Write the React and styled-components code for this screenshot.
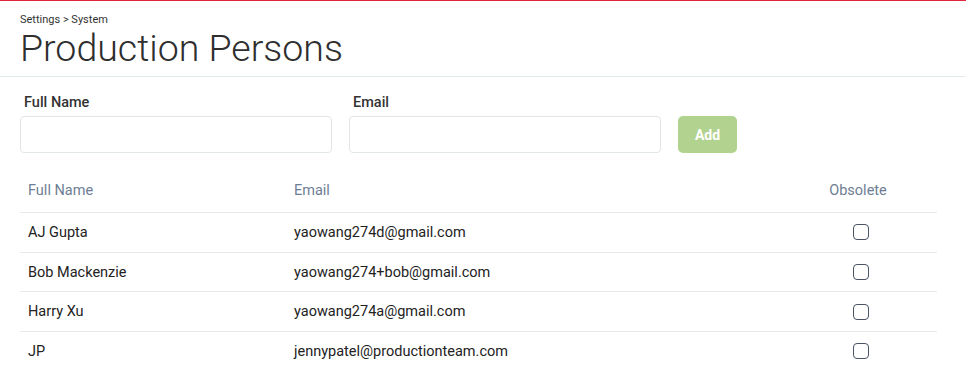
import React, { useState } from 'react'
import styled, { createGlobalStyle } from 'styled-components'

const GlobalStyle = createGlobalStyle`
    body {
        margin: 0;
        font-family: Roboto, "Liberation Sans", sans-serif;
        background: #fff;
        color: #222;
    }
`

const Page = styled.div`
    border-top: 1px solid #e2263a;
`

const Header = styled.header`
    padding: 12px 20px 7px;
    border-bottom: 1px solid #e3ebe8;
`

const Breadcrumb = styled.div`
    font-size: 11px;
    line-height: 14px;
    color: #333;
`

const Title = styled.h1`
    margin: 0;
    font-size: 37.5px;
    font-weight: 300;
    line-height: 42px;
    color: #2e2e2e;
`

const Content = styled.div`
    padding: 17px 20px 0;
`

const Form = styled.form`
    display: flex;
    align-items: flex-end;
    gap: 17px;
`

const Field = styled.label`
    display: flex;
    flex-direction: column;
    gap: 4px;
`

const Label = styled.span`
    padding-left: 4px;
    font-size: 14.5px;
    font-weight: 500;
    line-height: 18px;
    color: #333;
`

const Input = styled.input`
    box-sizing: border-box;
    width: 312px;
    height: 37px;
    border: 1px solid #e1e6e8;
    border-radius: 4px;
    font: inherit;
    font-size: 14px;
    padding: 0 10px;
    outline: none;
`

const AddButton = styled.button`
    box-sizing: border-box;
    width: 59px;
    height: 37px;
    border: none;
    border-radius: 5px;
    background: #b2d38f;
    color: #fff;
    font-family: inherit;
    font-size: 14px;
    font-weight: 700;
    cursor: not-allowed;
`

const Table = styled.div`
    width: 917px;
    margin-top: 16px;
`

const Row = styled.div`
    box-sizing: border-box;
    display: grid;
    grid-template-columns: 266px 1fr 158px;
    align-items: center;
    height: ${p => (p.$head ? '43px' : '39.7px')};
    border-top: ${p => (p.$head ? 'none' : '1px solid #e5eaec')};
    font-size: 14.5px;
    color: ${p => (p.$head ? '#6e7e94' : '#222')};
`

const Cell = styled.div`
    padding-left: ${p => (p.$center ? '0' : '8px')};
    display: flex;
    justify-content: ${p => (p.$center ? 'center' : 'flex-start')};
`

const Check = styled.input`
    appearance: none;
    margin: 0 0 0 6px;
    width: 16px;
    height: 16px;
    border: 1.5px solid #4b5263;
    border-radius: 4px;
    background: #fff;
    cursor: pointer;
    &:checked {
        background: #4b5263;
    }
`

const persons = [
    { name: 'AJ Gupta', email: 'yaowang274d@gmail.com' },
    { name: 'Bob Mackenzie', email: 'yaowang274+bob@gmail.com' },
    { name: 'Harry Xu', email: 'yaowang274a@gmail.com' },
    { name: 'JP', email: 'jennypatel@productionteam.com' },
]

const App = () => {
    const [name, setName] = useState('')
    const [email, setEmail] = useState('')

    return (
        <Page>
            <GlobalStyle />
            <Header>
                <Breadcrumb>Settings &gt; System</Breadcrumb>
                <Title>Production Persons</Title>
            </Header>
            <Content>
                <Form onSubmit={e => e.preventDefault()}>
                    <Field>
                        <Label>Full Name</Label>
                        <Input value={name} onChange={e => setName(e.target.value)} />
                    </Field>
                    <Field>
                        <Label>Email</Label>
                        <Input value={email} onChange={e => setEmail(e.target.value)} />
                    </Field>
                    <AddButton type="submit">Add</AddButton>
                </Form>
                <Table>
                    <Row $head>
                        <Cell>Full Name</Cell>
                        <Cell>Email</Cell>
                        <Cell $center>Obsolete</Cell>
                    </Row>
                    {persons.map(p => (
                        <Row key={p.email}>
                            <Cell>{p.name}</Cell>
                            <Cell>{p.email}</Cell>
                            <Cell $center><Check type="checkbox" /></Cell>
                        </Row>
                    ))}
                </Table>
            </Content>
        </Page>
    )
}

export default App
